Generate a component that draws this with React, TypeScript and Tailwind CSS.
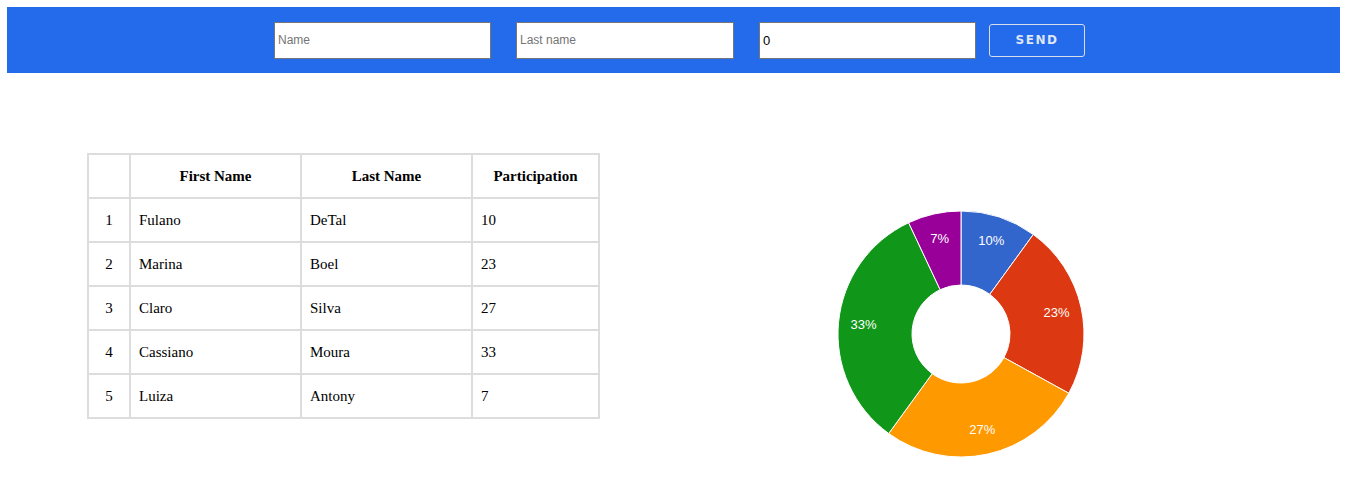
import React from 'react'

type Row = { id: number; first: string; last: string; value: number }

const rows: Row[] = [
  { id: 1, first: 'Fulano', last: 'DeTal', value: 10 },
  { id: 2, first: 'Marina', last: 'Boel', value: 23 },
  { id: 3, first: 'Claro', last: 'Silva', value: 27 },
  { id: 4, first: 'Cassiano', last: 'Moura', value: 33 },
  { id: 5, first: 'Luiza', last: 'Antony', value: 7 },
]

const colors = ['#3366cc', '#dc3912', '#ff9900', '#109618', '#990099']

/** Donut chart, slices drawn clockwise from 12 o'clock */
function Donut({ data }: { data: Row[] }) {
  const cx = 150
  const cy = 150
  const ro = 123
  const ri = 49
  const total = data.reduce((s, r) => s + r.value, 0)
  let acc = 0

  const pt = (a: number, r: number) => [cx + r * Math.sin(a), cy - r * Math.cos(a)]

  return (
    <svg width="300" height="300" viewBox="0 0 300 300">
      {data.map((r, i) => {
        const a0 = (acc / total) * Math.PI * 2
        acc += r.value
        const a1 = (acc / total) * Math.PI * 2
        const large = a1 - a0 > Math.PI ? 1 : 0
        const [x0, y0] = pt(a0, ro)
        const [x1, y1] = pt(a1, ro)
        const [x2, y2] = pt(a1, ri)
        const [x3, y3] = pt(a0, ri)
        const d = `M${x0} ${y0} A${ro} ${ro} 0 ${large} 1 ${x1} ${y1} L${x2} ${y2} A${ri} ${ri} 0 ${large} 0 ${x3} ${y3} Z`
        const mid = (a0 + a1) / 2
        const [lx, ly] = pt(mid, 98)
        const pct = Math.round((r.value / total) * 100)
        return (
          <g key={r.id}>
            <path d={d} fill={colors[i]} stroke="#ffffff" strokeWidth="1" />
            <text
              x={lx}
              y={ly + 4.5}
              textAnchor="middle"
              fill="#ffffff"
              fontSize="13"
              fontFamily="'Liberation Sans', Arial, sans-serif"
            >
              {pct}%
            </text>
          </g>
        )
      })}
    </svg>
  )
}

export default function App() {
  return (
    <div className="min-h-[502px] bg-white p-[7px]">
      <header className="flex h-[66px] items-center bg-[#236beb] pl-[267px]">
        <input
          placeholder="Name"
          className="h-[37px] w-[217px] border border-[#767676] bg-white px-[3px] text-[12px] text-black placeholder:text-[#757575] outline-none"
          style={{ fontFamily: "'Liberation Sans', Arial, sans-serif" }}
        />
        <input
          placeholder="Last name"
          className="ml-[25px] h-[37px] w-[218px] border border-[#767676] bg-white px-[3px] text-[12px] text-black placeholder:text-[#757575] outline-none"
          style={{ fontFamily: "'Liberation Sans', Arial, sans-serif" }}
        />
        <input
          defaultValue="0"
          className="ml-[25px] h-[37px] w-[217px] border border-[#767676] bg-white px-[3px] text-[13px] text-black outline-none"
          style={{ fontFamily: "'Liberation Sans', Arial, sans-serif" }}
        />
        <button className="ml-[13px] h-[33px] w-[96px] rounded-[3px] border border-[#d8dde8] font-['DejaVu_Sans',sans-serif] text-[12px] font-bold tracking-[1.5px] text-[#dfe6f3]">
          SEND
        </button>
      </header>

      <main className="flex items-start">
        <table
          className="ml-[80px] mt-[80px] w-[511px] table-fixed border-collapse border-2 border-[#dddddd] text-[15px] text-black"
          style={{ fontFamily: "'Liberation Serif', 'Times New Roman', serif" }}
        >
          <colgroup>
            <col className="w-[42px]" />
            <col className="w-[171px]" />
            <col className="w-[171px]" />
            <col className="w-[127px]" />
          </colgroup>
          <thead>
            <tr className="h-[44px]">
              <th className="border-2 border-[#dddddd]" />
              <th className="border-2 border-[#dddddd] font-bold">First Name</th>
              <th className="border-2 border-[#dddddd] font-bold">Last Name</th>
              <th className="border-2 border-[#dddddd] font-bold">Participation</th>
            </tr>
          </thead>
          <tbody>
            {rows.map((r) => (
              <tr key={r.id} className="h-[44px]">
                <td className="border-2 border-[#dddddd] text-center">{r.id}</td>
                <td className="border-2 border-[#dddddd] pl-[8px]">{r.first}</td>
                <td className="border-2 border-[#dddddd] pl-[8px]">{r.last}</td>
                <td className="border-2 border-[#dddddd] pl-[8px]">{r.value}</td>
              </tr>
            ))}
          </tbody>
        </table>

        <div className="ml-[211px] mt-[111px]">
          <Donut data={rows} />
        </div>
      </main>
    </div>
  )
}
